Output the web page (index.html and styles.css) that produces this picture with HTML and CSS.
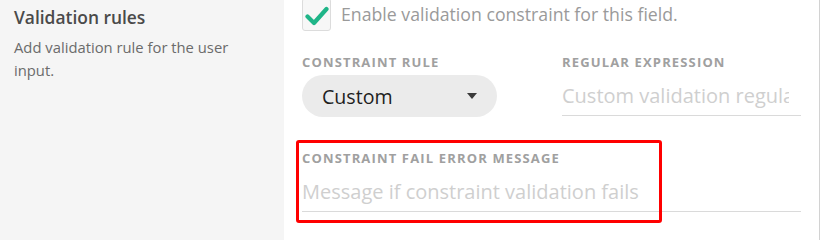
FILE: index.html
```html
<!DOCTYPE html>
<html>
<head>
<meta charset="utf-8">
<link rel="stylesheet" href="styles.css">
</head>
<body>
<div class="page">
  <aside class="side">
    <h2 class="side-title">Validation rules</h2>
    <p class="side-desc">Add validation rule for the user input.</p>
  </aside>
  <main class="main">
    <label class="check-row">
      <span class="checkbox">
        <svg width="24" height="20" viewBox="0 0 24 20"><path d="M2.5 10.5 L9 17 L21.5 3" fill="none" stroke="#1fb588" stroke-width="4.2" stroke-linecap="round" stroke-linejoin="round"/></svg>
      </span>
      <span class="check-text">Enable validation constraint for this field.</span>
    </label>
    <div class="row">
      <div class="field field-rule">
        <div class="label">CONSTRAINT RULE</div>
        <div class="select">
          <span class="select-value">Custom</span>
          <span class="caret"></span>
        </div>
      </div>
      <div class="field field-regex">
        <div class="label">REGULAR EXPRESSION</div>
        <div class="input"><span class="placeholder clip">Custom validation regula</span></div>
      </div>
    </div>
    <div class="field field-msg">
      <div class="label">CONSTRAINT FAIL ERROR MESSAGE</div>
      <div class="input"><span class="placeholder">Message if constraint validation fails</span></div>
      <div class="highlight"></div>
    </div>
  </main>
</div>
</body>
</html>
```
FILE: styles.css
```css
html, body {
  margin: 0;
  padding: 0;
  background: #ffffff;
  font-family: "Open Sans", "Noto Sans", sans-serif;
}
.page {
  display: flex;
  width: 820px;
  height: 240px;
  overflow: hidden;
}
.side {
  width: 284px;
  flex: none;
  background: #f5f5f5;
  padding: 5px 14px 0 14px;
  box-sizing: border-box;
}
.side-title {
  margin: 0;
  font-size: 17.4px;
  font-weight: 600;
  color: #4a4a4a;
  line-height: 24px;
}
.side-desc {
  margin: 7px 0 0 0;
  font-size: 14.8px;
  line-height: 23px;
  color: #6b6b6b;
  width: 250px;
}
.main {
  flex: 1;
  border-right: 1px solid #d2d2d2;
  padding: 0 18px 0 18px;
  box-sizing: border-box;
  display: flex;
  flex-direction: column;
}
.check-row {
  display: flex;
  align-items: center;
  gap: 10px;
  margin-top: -3px;
  height: 34px;
}
.checkbox {
  width: 29px;
  height: 33px;
  border: 1px solid #dcdcdc;
  border-radius: 3px;
  background: #f7f7f7;
  box-sizing: border-box;
  display: flex;
  align-items: center;
  justify-content: center;
  padding-top: 3px;
  flex: none;
}
.check-text {
  font-size: 17.7px;
  color: #9a9a9a;
  white-space: nowrap;
}
.row {
  display: flex;
  gap: 65px;
  margin-top: 23px;
}
.label {
  font-size: 13px;
  font-weight: 700;
  letter-spacing: 1.15px;
  color: #a0a0a0;
  line-height: 16px;
  white-space: nowrap;
}
.field-rule {
  width: 195px;
  flex: none;
}
.select {
  margin-top: 5px;
  height: 42px;
  border-radius: 21px;
  background: #ebebeb;
  display: flex;
  align-items: center;
  justify-content: space-between;
  padding: 0 20px 0 20px;
  box-sizing: border-box;
}
.select-value {
  font-size: 19.6px;
  color: #1e1e1e;
}
.caret {
  width: 0;
  height: 0;
  border-left: 5px solid transparent;
  border-right: 5px solid transparent;
  border-top: 6px solid #3a3a3a;
}
.field-regex {
  flex: 1;
}
.input {
  border-bottom: 1px solid #dadada;
  height: 39px;
  display: flex;
  align-items: center;
  overflow: hidden;
  white-space: nowrap;
  margin-top: 6px;
}
.placeholder {
  font-size: 20px;
  color: #cfcfcf;
}
.clip {
  display: block;
  width: 227px;
  overflow: hidden;
}
.field-msg {
  position: relative;
  margin-top: 33px;
}
.highlight {
  position: absolute;
  left: -6px;
  top: -10px;
  width: 366px;
  height: 83px;
  border: 3px solid #ff0000;
  border-radius: 3px;
  box-sizing: border-box;
}
```
